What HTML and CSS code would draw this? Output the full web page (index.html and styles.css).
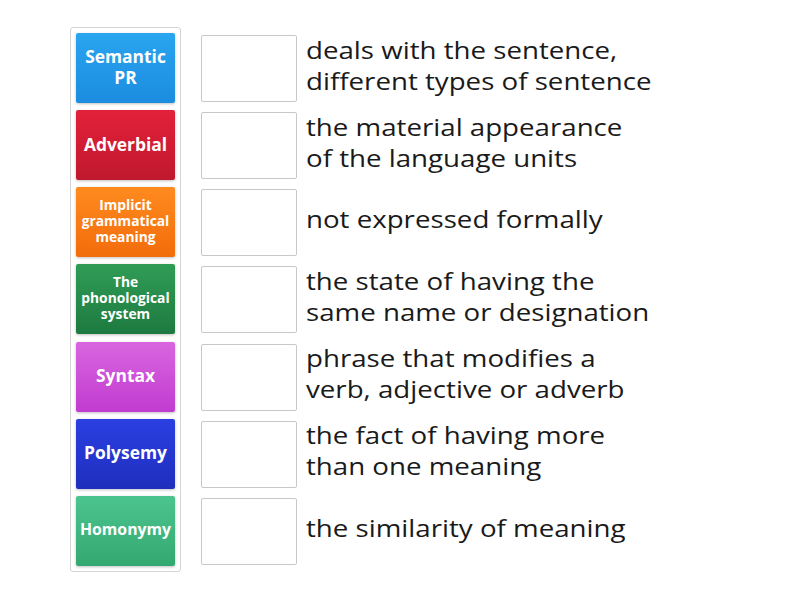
FILE: index.html
```html
<!DOCTYPE html>
<html>
<head>
<meta charset="utf-8">
<link rel="stylesheet" href="styles.css">
</head>
<body>
<div class="game">
  <div class="panel">
    <div class="tile blue"><span class="t17">Semantic PR</span></div>
    <div class="tile red"><span class="t17">Adverbial</span></div>
    <div class="tile orange"><span class="t13">Implicit grammatical meaning</span></div>
    <div class="tile green"><span class="t13">The phonological system</span></div>
    <div class="tile purple"><span class="t17">Syntax</span></div>
    <div class="tile navy"><span class="t17">Polysemy</span></div>
    <div class="tile teal"><span class="t15">Homonymy</span></div>
  </div>
  <div class="rows">
    <div class="row"><div class="box"></div><div class="clip"><div class="text">deals with the sentence, different types of sentence</div></div></div>
    <div class="row"><div class="box"></div><div class="clip"><div class="text">the material appearance of the language units</div></div></div>
    <div class="row"><div class="box"></div><div class="clip"><div class="text">not expressed formally</div></div></div>
    <div class="row"><div class="box"></div><div class="clip"><div class="text">the state of having the same name or designation</div></div></div>
    <div class="row"><div class="box"></div><div class="clip"><div class="text">phrase that modifies a verb, adjective or adverb</div></div></div>
    <div class="row"><div class="box"></div><div class="clip"><div class="text">the fact of having more than one meaning</div></div></div>
    <div class="row"><div class="box"></div><div class="clip"><div class="text">the similarity of meaning</div></div></div>
  </div>
</div>
</body>
</html>
```
FILE: styles.css
```css
html, body {
  margin: 0;
  padding: 0;
  background: #ffffff;
  font-family: "Open Sans", "Liberation Sans", sans-serif;
}
.game {
  display: flex;
  align-items: flex-start;
  padding: 27px 0 0 70px;
}
.panel {
  display: flex;
  flex-direction: column;
  gap: 7.17px;
  padding: 5px;
  border: 1px solid #d4d4d4;
  border-radius: 3px;
}
.tile {
  width: 99px;
  height: 70px;
  border-radius: 2px;
  display: flex;
  align-items: center;
  justify-content: center;
  text-align: center;
  color: #ffffff;
  font-weight: 700;
  box-shadow: 0 1px 3px rgba(0,0,0,0.25);
  padding: 0 2px 2px;
  box-sizing: border-box;
}
.t17 { font-size: 17.4px; line-height: 21px; }
.t15 { font-size: 15.8px; line-height: 19px; }
.t13 { font-size: 13.8px; line-height: 16px; }
.blue { background: linear-gradient(#2aa5ef, #1b8ce0); }
.red { background: linear-gradient(#e2213a, #c0182d); }
.orange { background: linear-gradient(#ff8b1f, #f26c0b); }
.green { background: linear-gradient(#2f9d56, #1e7a40); }
.purple { background: linear-gradient(#d866df, #c13bd0); }
.navy { background: linear-gradient(#2b3fe2, #1e2fbd); }
.teal { background: linear-gradient(#4cc48e, #34a871); }
.rows {
  display: flex;
  flex-direction: column;
  gap: 7.17px;
  padding-top: 6px;
  margin-left: 20px;
}
.row {
  display: flex;
  align-items: center;
  height: 70px;
}
.box {
  align-self: flex-start;
  width: 96px;
  height: 67px;
  box-sizing: border-box;
  border: 1px solid #c8c8c8;
  border-radius: 2px;
  background: #fff;
  margin-top: 2px;
  flex: none;
}
.clip {
  width: 348px;
  margin-left: 9px;
  padding-bottom: 7px;
}
.text {
  width: 303px;
  font-size: 24px;
  line-height: 31px;
  color: #1a1a1a;
  transform: scaleX(1.153);
  transform-origin: 0 0;
}
```
